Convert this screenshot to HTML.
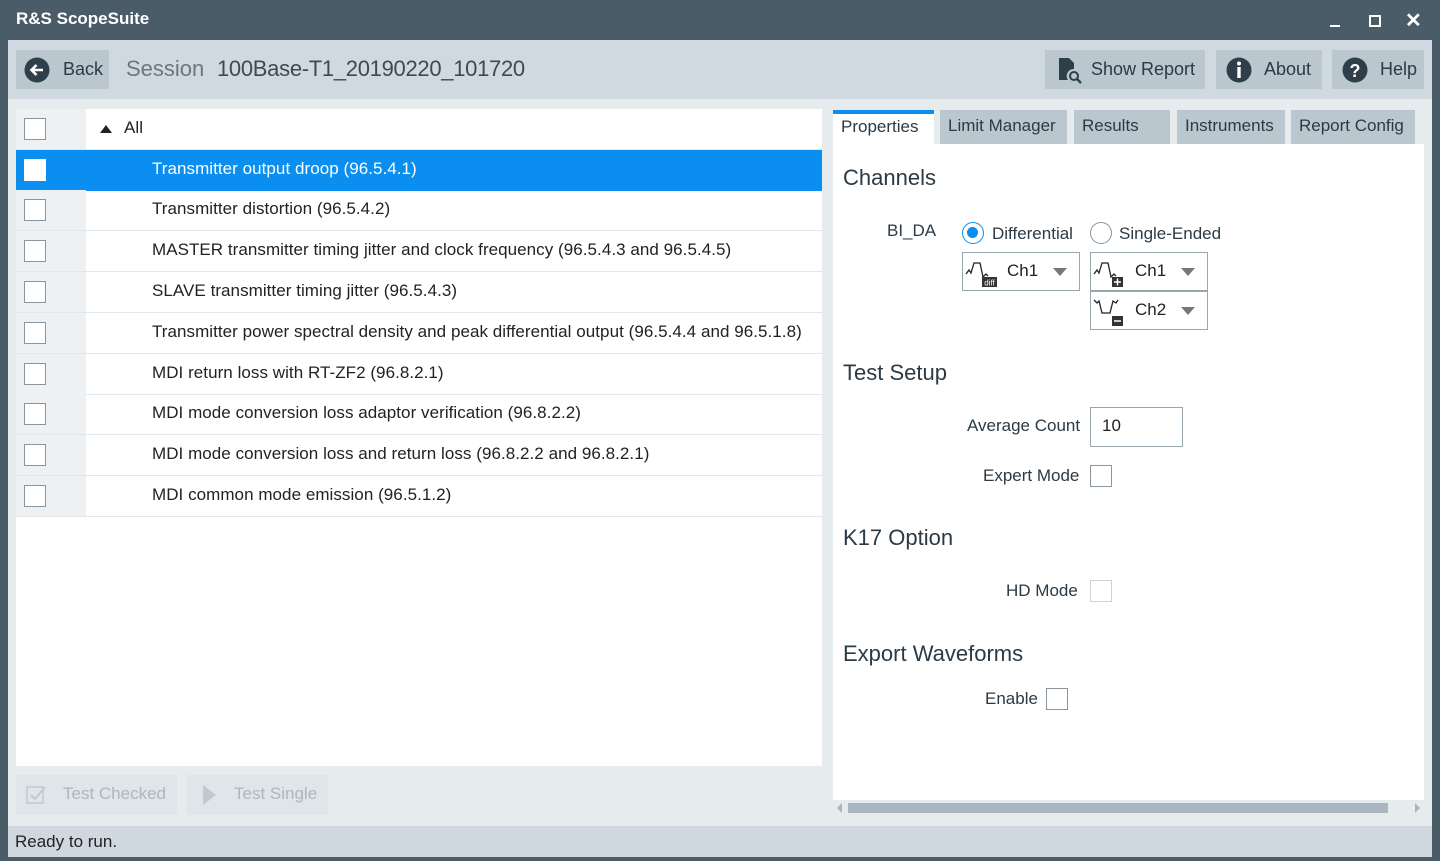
<!DOCTYPE html>
<html><head><meta charset="utf-8"><style>
*{margin:0;padding:0;box-sizing:border-box}
body{width:1440px;height:861px;overflow:hidden;background:#4b5c69;font-family:"Liberation Sans",sans-serif;color:#222;position:relative}
.a{position:absolute}
.t{white-space:nowrap}
.cb{position:absolute;width:22px;height:22px;border:1.5px solid #8a959d;background:#fff}
.btn{position:absolute;background:#bac7cf;height:39px;font-size:18px;color:#2b3a44;display:flex;align-items:center}
.row{position:absolute;left:16px;width:806px;height:41px;border-bottom:1px solid #e3e7ea}
.row .ck{position:absolute;left:0;top:0;width:70px;height:40px;background:#eef1f4}
.row .lbl{position:absolute;left:136px;top:9px;font-size:17px;white-space:nowrap;letter-spacing:0.05px}
.tab{position:absolute;top:110px;height:34px;background:#bac7cf;font-size:17px;color:#2b3a44;padding:6px 8px}
.h{position:absolute;left:843px;font-size:22px;color:#2b3a44}
.lb{position:absolute;font-size:17px;color:#2b3a44;white-space:nowrap}
.dd{position:absolute;width:118px;height:39px;border:1.5px solid #9aa6ae;background:#fff}
.dd span{position:absolute;left:44px;top:8px;font-size:17px}
.dd i{position:absolute;right:12px;top:15px;width:0;height:0;border-left:7px solid transparent;border-right:7px solid transparent;border-top:8px solid #777}
</style></head><body>
<div class="a" style="left:0;top:0;width:1440px;height:40px;background:#4b5c69"></div>
<div class="a t" style="left:16px;top:9px;color:#fff;font-weight:bold;font-size:17px">R&amp;S ScopeSuite</div>
<div class="a" style="left:1330px;top:25px;width:10px;height:2px;background:#fff"></div>
<div class="a" style="left:1369px;top:15px;width:12px;height:12px;border:2px solid #fff"></div>
<div class="a t" style="left:1405px;top:8px;color:#fff;font-size:20px;font-weight:bold">✕</div>

<div class="a" style="left:8px;top:40px;width:1424px;height:59px;background:#d0d9e0"></div>
<div class="btn" style="left:16px;top:50px;width:93px"><svg style="margin-left:8px" width="26" height="26" viewBox="0 0 26 26"><circle cx="13" cy="13" r="12.5" fill="#2f3f4a"/><path d="M19 13H8M12.5 8L7.5 13l5 5" stroke="#fff" stroke-width="2.6" fill="none"/></svg><span style="margin-left:13px">Back</span></div>
<div class="a t" style="left:126px;top:56px;font-size:22px;color:#6b7780">Session</div>
<div class="a t" style="left:217px;top:56px;font-size:22px;color:#3c4a54;letter-spacing:-0.3px">100Base-T1_20190220_101720</div>
<div class="btn" style="left:1045px;top:50px;width:160px"><svg style="margin-left:12px" width="26" height="28" viewBox="0 0 26 28"><path d="M2 2h10l5 5v6a7 7 0 0 0-6 11H2z" fill="#2f3f4a"/><circle cx="17" cy="20" r="4" stroke="#2f3f4a" stroke-width="2" fill="none"/><path d="M20 23l4 4" stroke="#2f3f4a" stroke-width="2.4"/></svg><span style="margin-left:8px">Show Report</span></div>
<div class="btn" style="left:1216px;top:50px;width:106px"><svg style="margin-left:10px" width="26" height="26" viewBox="0 0 26 26"><circle cx="13" cy="13" r="12.5" fill="#2f3f4a"/><rect x="11.3" y="10" width="3.4" height="11" fill="#fff"/><circle cx="13" cy="6.5" r="2" fill="#fff"/></svg><span style="margin-left:12px">About</span></div>
<div class="btn" style="left:1332px;top:50px;width:92px"><svg style="margin-left:10px" width="26" height="26" viewBox="0 0 26 26"><circle cx="13" cy="13" r="12.5" fill="#2f3f4a"/><text x="13" y="20" text-anchor="middle" fill="#fff" font-size="18" font-weight="bold" font-family="Liberation Sans">?</text></svg><span style="margin-left:12px">Help</span></div>

<div class="a" style="left:8px;top:99px;width:1424px;height:727px;background:#e6ebee"></div>
<div class="a" style="left:16px;top:109px;width:806px;height:657px;background:#fff"></div>
<div class="row" style="top:109px"><div class="ck"></div><div class="cb" style="left:8px;top:9px"></div><div class="a" style="left:84px;top:16px;width:0;height:0;border-left:6px solid transparent;border-right:6px solid transparent;border-bottom:8px solid #222"></div><div class="lbl" style="left:108px">All</div></div>
<div class="row" style="top:150px;background:#0a8ef0;border:none"><div class="cb" style="left:8px;top:9px;border-color:#fff"></div><div class="lbl" style="color:#fff">Transmitter output droop (96.5.4.1)</div></div>
<div class="row" style="top:190px"><div class="ck"></div><div class="cb" style="left:8px;top:9px"></div><div class="lbl">Transmitter distortion (96.5.4.2)</div></div>
<div class="row" style="top:231px"><div class="ck"></div><div class="cb" style="left:8px;top:9px"></div><div class="lbl">MASTER transmitter timing jitter and clock frequency (96.5.4.3 and 96.5.4.5)</div></div>
<div class="row" style="top:272px"><div class="ck"></div><div class="cb" style="left:8px;top:9px"></div><div class="lbl">SLAVE transmitter timing jitter (96.5.4.3)</div></div>
<div class="row" style="top:313px"><div class="ck"></div><div class="cb" style="left:8px;top:9px"></div><div class="lbl">Transmitter power spectral density and peak differential output (96.5.4.4 and 96.5.1.8)</div></div>
<div class="row" style="top:354px"><div class="ck"></div><div class="cb" style="left:8px;top:9px"></div><div class="lbl">MDI return loss with RT-ZF2 (96.8.2.1)</div></div>
<div class="row" style="top:394px"><div class="ck"></div><div class="cb" style="left:8px;top:9px"></div><div class="lbl">MDI mode conversion loss adaptor verification (96.8.2.2)</div></div>
<div class="row" style="top:435px"><div class="ck"></div><div class="cb" style="left:8px;top:9px"></div><div class="lbl">MDI mode conversion loss and return loss (96.8.2.2 and 96.8.2.1)</div></div>
<div class="row" style="top:476px"><div class="ck"></div><div class="cb" style="left:8px;top:9px"></div><div class="lbl">MDI common mode emission (96.5.1.2)</div></div>

<div class="a" style="left:16px;top:775px;width:161px;height:40px;background:#e0e5e9"></div>
<svg class="a" style="left:25px;top:783px" width="26" height="26" viewBox="0 0 26 26"><rect x="2" y="4" width="16" height="16" fill="none" stroke="#c2c9ce" stroke-width="1.5"/><path d="M6 12l4 4 10-12" stroke="#c2c9ce" stroke-width="2" fill="none"/></svg>
<div class="a t" style="left:63px;top:784px;font-size:17px;color:#aeb6bc">Test Checked</div>
<div class="a" style="left:187px;top:775px;width:141px;height:40px;background:#e0e5e9"></div>
<div class="a" style="left:203px;top:785px;width:0;height:0;border-top:10px solid transparent;border-bottom:10px solid transparent;border-left:13px solid #c2c9ce"></div>
<div class="a t" style="left:234px;top:784px;font-size:17px;color:#aeb6bc">Test Single</div>

<div class="a" style="left:833px;top:144px;width:591px;height:656px;background:#fff"></div>
<div class="tab" style="left:833px;width:101px;background:#fff;border-top:4px solid #0a8ef0;padding-top:3px">Properties</div>
<div class="tab" style="left:940px;width:127px">Limit Manager</div>
<div class="tab" style="left:1074px;width:96px">Results</div>
<div class="tab" style="left:1177px;width:108px">Instruments</div>
<div class="tab" style="left:1291px;width:124px">Report Config</div>

<div class="h t" style="top:165px">Channels</div>
<div class="lb" style="left:887px;top:221px">BI_DA</div>
<div class="a" style="left:962px;top:222px;width:22px;height:22px;border-radius:50%;border:1.5px solid #0a8ef0;background:#fff"><div class="a" style="left:4px;top:4px;width:11px;height:11px;border-radius:50%;background:#0a8ef0"></div></div>
<div class="lb" style="left:992px;top:224px">Differential</div>
<div class="a" style="left:1090px;top:222px;width:22px;height:22px;border-radius:50%;border:1.5px solid #8a959d;background:#fff"></div>
<div class="lb" style="left:1119px;top:224px">Single-Ended</div>
<div class="dd" style="left:962px;top:252px"><svg class="a" style="left:2px;top:3px" width="36" height="32" viewBox="0 0 36 32"><path d="M1 18l3-4 2 3 3-10h6l3 14 3-3 2 2" stroke="#222" stroke-width="1.3" fill="none"/><rect x="17" y="21" width="15" height="10" fill="#333"/><text x="24.5" y="29.5" text-anchor="middle" fill="#fff" font-size="8" font-family="Liberation Sans">diff</text></svg><span>Ch1</span><i></i></div>
<div class="dd" style="left:1090px;top:252px"><svg class="a" style="left:2px;top:3px" width="36" height="32" viewBox="0 0 36 32"><path d="M1 18l3-4 2 3 3-10h6l3 14 3-3 2 2" stroke="#222" stroke-width="1.3" fill="none"/><rect x="19" y="21" width="11" height="10" fill="#333"/><path d="M24.5 22.5v7M21 26h7" stroke="#fff" stroke-width="1.5"/></svg><span>Ch1</span><i></i></div>
<div class="dd" style="left:1090px;top:291px"><svg class="a" style="left:2px;top:3px" width="36" height="32" viewBox="0 0 36 32"><path d="M1 5l3 3 2-2 3 12h8l3-12 3 2 2-3" stroke="#222" stroke-width="1.3" fill="none"/><rect x="19" y="21" width="11" height="10" fill="#333"/><path d="M21 26h7" stroke="#fff" stroke-width="1.5"/></svg><span>Ch2</span><i></i></div>

<div class="h t" style="top:360px">Test Setup</div>
<div class="lb" style="left:967px;top:416px">Average Count</div>
<div class="a" style="left:1090px;top:407px;width:93px;height:40px;border:1.5px solid #9aa6ae;background:#fff;font-size:17px;padding:8px 11px">10</div>
<div class="lb" style="left:983px;top:466px">Expert Mode</div>
<div class="cb" style="left:1090px;top:465px"></div>

<div class="h t" style="top:525px">K17 Option</div>
<div class="lb" style="left:1006px;top:581px">HD Mode</div>
<div class="cb" style="left:1090px;top:580px;border-color:#ccd2d6"></div>

<div class="h t" style="top:641px">Export Waveforms</div>
<div class="lb" style="left:985px;top:689px">Enable</div>
<div class="cb" style="left:1046px;top:688px"></div>

<div class="a" style="left:833px;top:800px;width:591px;height:16px;background:#e6ebee"></div>
<div class="a" style="left:848px;top:803px;width:540px;height:10px;background:#a9b6bf"></div>
<div class="a" style="left:837px;top:803px;width:0;height:0;border-top:5px solid transparent;border-bottom:5px solid transparent;border-right:5px solid #a9b6bf"></div>
<div class="a" style="left:1415px;top:803px;width:0;height:0;border-top:5px solid transparent;border-bottom:5px solid transparent;border-left:5px solid #a9b6bf"></div>

<div class="a" style="left:8px;top:826px;width:1424px;height:31px;background:#cfd8df"></div>
<div class="a t" style="left:15px;top:832px;font-size:17px;color:#222">Ready to run.</div>
</body></html>
